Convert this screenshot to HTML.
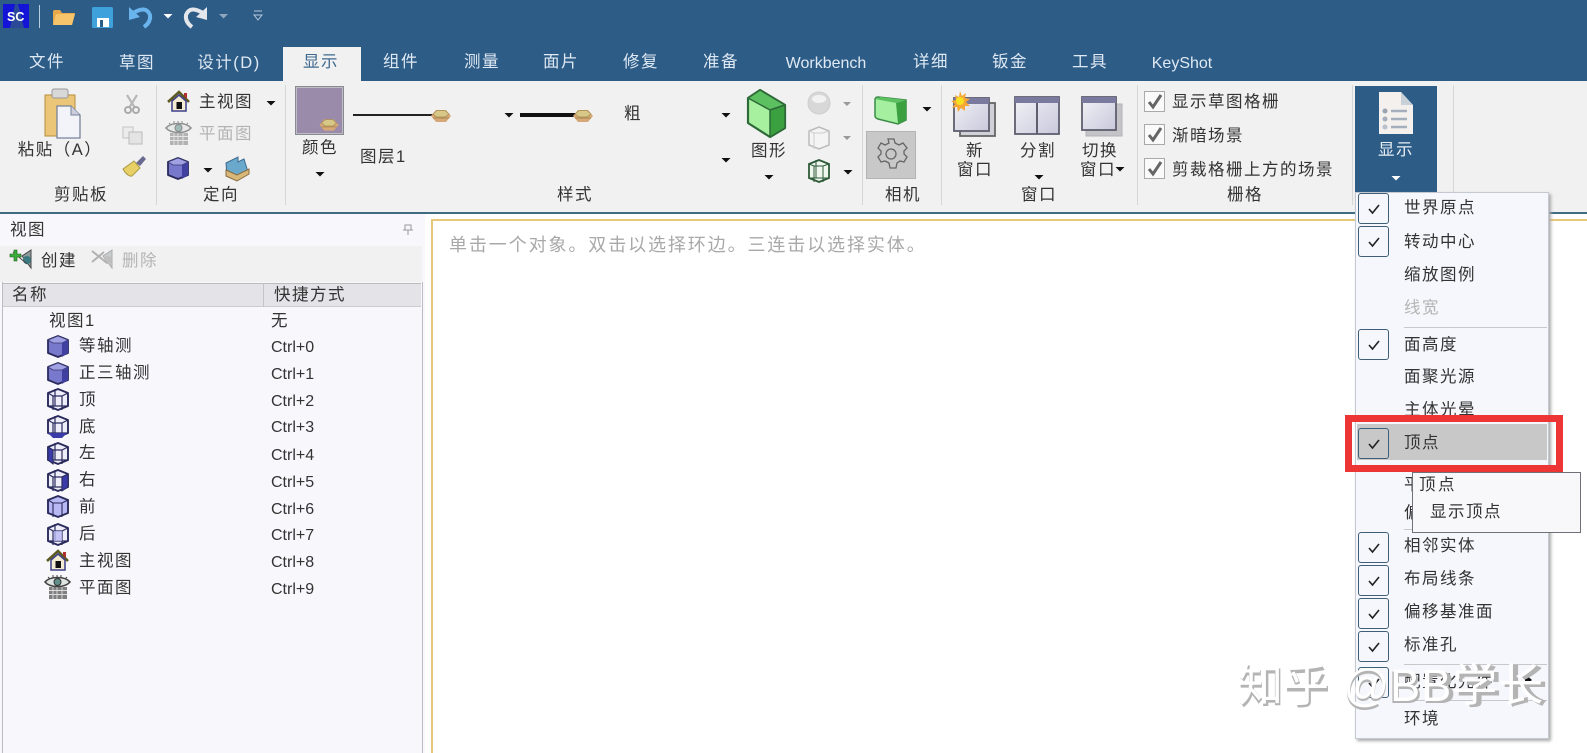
<!DOCTYPE html>
<html lang="zh">
<head>
<meta charset="utf-8">
<title>SpaceClaim</title>
<style>
html,body{margin:0;padding:0}
body{width:1587px;height:753px;overflow:hidden;position:relative;background:#fff;font-family:"Liberation Sans","Noto Sans CJK SC",sans-serif}
.b{position:absolute}
.t{position:absolute;white-space:nowrap;font-size:16.5px;line-height:20px;letter-spacing:1.5px;color:#333}
.c{transform:translateX(-50%)}
.w{color:#dfe9f3}
.g{color:#b4b4b4}
.l{letter-spacing:0;font-size:16px}
.ck{position:absolute;left:1358px;width:29px;height:29px;border:1px solid #3f5f78;border-radius:3px}
.ck svg{position:absolute;left:8px;top:9px}
.cb{position:absolute;left:1144px;width:19px;height:19px;border:1px solid #aaa;background:#fafafa}
.cb svg{position:absolute;left:2px;top:1px}
</style>
</head>
<body>
<div class="b" style="left:0;top:0;width:1587px;height:81px;background:#2d5c87"></div>
<div class="b" style="left:283px;top:47px;width:78px;height:34px;background:#f1f1f1"></div>
<div class="b" style="left:0;top:81px;width:1587px;height:131px;background:#f1f1f1"></div>
<div class="b" style="left:0;top:212px;width:1587px;height:2px;background:#3e6c82"></div>
<div class="b" style="left:0;top:214px;width:1587px;height:539px;background:#fff"></div>
<div class="b" style="left:0;top:214px;width:425px;height:539px;background:#f8f8fc"></div>
<div class="b" style="left:0;top:246px;width:422px;height:36px;background:#f1f1f1"></div>
<div class="b" style="left:2px;top:282px;width:421px;height:471px;border-left:1px solid #bcbcc6;border-right:1px solid #bcbcc6;box-sizing:border-box"></div>
<div class="b" style="left:3px;top:283px;width:418px;height:24px;background:#e4e4e8;border-top:1px solid #bbb;border-bottom:1px solid #ccc;box-sizing:border-box"></div>
<div class="b" style="left:263px;top:283px;width:1px;height:24px;background:#c4c4c8"></div>
<div class="b" style="left:431px;top:219px;width:1156px;height:2px;background:#e6c878"></div>
<div class="b" style="left:431px;top:219px;width:2px;height:534px;background:#e6c878"></div>
<div class="b" style="left:156px;top:85px;width:1px;height:120px;background:#d6d6d6"></div>
<div class="b" style="left:285px;top:85px;width:1px;height:120px;background:#d6d6d6"></div>
<div class="b" style="left:862px;top:85px;width:1px;height:120px;background:#d6d6d6"></div>
<div class="b" style="left:941px;top:85px;width:1px;height:120px;background:#d6d6d6"></div>
<div class="b" style="left:1137px;top:85px;width:1px;height:120px;background:#d6d6d6"></div>
<div class="b" style="left:1352px;top:85px;width:1px;height:120px;background:#d6d6d6"></div>
<div class="b" style="left:1453px;top:85px;width:1px;height:120px;background:#d6d6d6"></div>
<div class="b" style="left:295px;top:86px;width:45px;height:45px;background:#9b8bab;border:2px solid #bdbdc4;outline:1px solid #8a8a92;outline-offset:-1px"></div>
<div class="b" style="left:866px;top:131px;width:48px;height:46px;background:#c8c8c8;border:1px solid #b4b4b4"></div>
<div class="b" style="left:1355px;top:86px;width:82px;height:106px;background:#2d5c87"></div>

<svg class="b" style="left:0;top:0" width="1587" height="753" viewBox="0 0 1587 753">
<defs>
<path id="a" d="M-4.500 -2h9l-4.500 4.500z" fill="#111"/>
<g id="lens"><path d="M-10 1l5-6h10l5 6-5 6H-5z" fill="#d6a878"/><path d="M-8 -1l4-3.500h8l4 3.500-4 3H-4z" fill="#d8c888" stroke="#a88a50" stroke-width=".7"/><path d="M-8 3h16" stroke="#a88a50" stroke-width="1"/></g>
<g id="solid" stroke-linejoin="round"><path d="M11 1l10 4v13l-10 4-10-4V5z" fill="#7878cc" stroke="#2a2a5c" stroke-width="1.800"/><path d="M1 5l10-4 10 4-6 3H6z" fill="#a0a0e4" stroke="#3a3a70" stroke-width=".8"/><path d="M15 8l6-3v13l-6 4z" fill="#4040a0"/></g>
<g id="wire" stroke-linejoin="round"><path d="M11 1l10 4v13l-10 4-10-4V5z" fill="#eeeefa" stroke="#2a2a5c" stroke-width="1.900"/><path d="M1 5l5 3h9l6-3M6 8v14M15 8v14M1 18h20M8 1v17" fill="none" stroke="#2a2a5c" stroke-width="1.200"/></g>
<g id="home"><path d="M1 12L12 2l10 10" fill="none" stroke="#5d5a24" stroke-width="2.600"/><path d="M17 3h3v6l-3-3z" fill="#b03030"/><path d="M5 11l7-6 7 6v10H5z" fill="#f3ecd2" stroke="#3e3e88" stroke-width="1.500"/><rect x="9.500" y="12" width="5.500" height="7" fill="#111"/></g>
<g id="eye"><rect x="4" y="12" width="18" height="12" fill="#7f7f7f"/><path d="M4 15.500h18M4 19.500h18M8 12v12M12 12v12M17 12v12" stroke="#ddd" stroke-width=".9"/><path d="M0 7c5-6 20-6 25 0-5 6-20 6-25 0z" fill="#dfe5e3" stroke="#444" stroke-width="1.600"/><circle cx="12.500" cy="7" r="3.500" fill="#5f8f88" stroke="#333"/><path d="M3 2l2 2M8 0v3M12 0v3M16 0v3M22 2l-2 2" stroke="#444"/></g>
<linearGradient id="win" x1="0" y1="0" x2="1" y2="1"><stop offset="0" stop-color="#f2f2f6"/><stop offset="1" stop-color="#c8c8dc"/></linearGradient>
</defs>

<!-- quick access toolbar -->
<rect x="3" y="4" width="26" height="24" fill="#1414d8"/>
<path d="M10 28L15 4h3l6 24z" fill="#2a4a98"/>
<text x="7" y="21" font-family="Liberation Sans" font-weight="700" font-size="12.500" fill="#fff">SC</text>
<rect x="39" y="5" width="1" height="23" fill="#b9cde0"/>
<path d="M53 12v11q0 2 2 2h17l3-12H62l-2-3h-5q-2 0-2 2z" fill="#e9a94a"/><path d="M56 14h19l-3 11H53z" fill="#f7c46c"/>
<rect x="92" y="7" width="21" height="21" rx="1.500" fill="#3fa1dc"/><rect x="97" y="18" width="12" height="9" fill="#fff"/><rect x="100" y="20" width="3" height="7" fill="#2d5c87"/>
<path d="M133 13Q146 5 150 15Q151 22 144 27" fill="none" stroke="#6ab4ee" stroke-width="4"/><path d="M129 7v13l11-3z" fill="#6ab4ee"/>
<path d="M163.500 14h9L168 18.500z" fill="#fff"/>
<path d="M203 13Q190 5 186 15Q185 22 192 27" fill="none" stroke="#e3e6ea" stroke-width="4"/><path d="M207 7v13l-11-3z" fill="#e3e6ea"/>
<path d="M219 14h9l-4.500 4.500z" fill="#8ea7bf"/>
<path d="M254 11h8M254 15h8l-4 5z" fill="none" stroke="#b8c8d8" stroke-width="1"/>

<!-- paste -->
<path d="M45 95h30v41H45z" fill="#ecc678" stroke="#b68c3c"/><rect x="52" y="89" width="16" height="9" rx="2" fill="#d8d8d8" stroke="#999"/>
<path d="M57 106h14l9 9v23H57z" fill="#f2f4fa" stroke="#77839a" stroke-width="1.300"/><path d="M71 106v9h9" fill="#ccd" stroke="#77839a"/>
<path d="M127 95l8 13M137 95l-8 13" stroke="#b8b8b8" stroke-width="2.200"/><circle cx="128" cy="110" r="3" fill="none" stroke="#aaa" stroke-width="2"/><circle cx="136" cy="110" r="3" fill="none" stroke="#aaa" stroke-width="2"/>
<rect x="123" y="127" width="10" height="11" fill="#ececec" stroke="#c4c4c4"/><rect x="129" y="132" width="13" height="12" fill="#e4e4e4" stroke="#bbb"/>
<path d="M123 169l11-8 6 7-8 8c-3 1-7-3-9-7z" fill="#e8cf66" stroke="#a99a44"/><path d="M136 163l7-7 3 3-6 7z" fill="#6a6a90"/>

<!-- orientation -->
<use href="#home" transform="translate(167 90)"/>
<g opacity=".55"><use href="#eye" transform="translate(166 121)"/></g>
<use href="#a" x="271" y="103"/>
<use href="#solid" transform="translate(167 157)"/>
<use href="#a" x="208" y="170"/>
<path d="M226 163l12-6v5l6-3 4 13-11 7-10-4z" fill="#6aa8cc" stroke="#3c6a90"/><path d="M226 170l11 5 12-6v5l-12 7-11-5z" fill="#d8b878" stroke="#8a6a3c"/>

<!-- style -->
<use href="#lens" transform="translate(329 124) scale(.95)"/>
<use href="#a" x="320" y="174"/>
<rect x="353" y="114" width="82" height="2" fill="#222"/>
<use href="#lens" transform="translate(441 115)"/>
<use href="#a" x="509" y="115"/>
<rect x="520" y="113" width="57" height="4" fill="#111"/>
<use href="#lens" transform="translate(583 115)"/>
<use href="#a" x="726" y="115"/>
<use href="#a" x="726" y="160"/>

<!-- graphics -->
<g stroke="#2d6a38" stroke-linejoin="round">
<path d="M748 98l12-8 25 15v23l-15 9-22-14z" fill="#a6f0a0" stroke-width="2.200"/>
<path d="M748 98l12-8 25 15-15 5z" fill="#5cc060" stroke-width="1.500"/>
<path d="M770 110l15-5v23l-15 9z" fill="#3aa040" stroke-width="1.500"/>
</g>
<use href="#a" x="769" y="177"/>
<circle cx="819" cy="103" r="11" fill="#d8d8d8" stroke="#ccc"/><ellipse cx="819" cy="99" rx="7" ry="4" fill="#f2f2f2"/>
<path d="M843 102h8l-4 4z" fill="#999"/>
<path d="M809 131l10-4 10 4v14l-10 4-10-4z" fill="#f4f4f4" stroke="#bbb" stroke-width="1.500"/><path d="M814 133v16M809 131l5 2h9l6-2" fill="none" stroke="#ccc"/>
<path d="M843 136h8l-4 4z" fill="#999"/>
<path d="M809 164l10-4 10 4v14l-10 4-10-4z" fill="#eef6ee" stroke="#2d5a38" stroke-width="1.800"/><path d="M809 164l5 2h9l6-2M814 166v16M823 166v16M809 178h20M816 160v18" fill="none" stroke="#2d5a38"/>
<use href="#a" x="848" y="172"/>

<!-- camera -->
<path d="M875 100q0-3 3-3l28 3v20l-8 4-20-5q-3-1-3-3z" fill="#a4f0a0" stroke="#3a8a48" stroke-width="1.500"/><path d="M896 103l10-3v20l-8 4z" fill="#3aa040"/><path d="M875 99l6-2 25 3-10 3z" fill="#5cc060"/>
<use href="#a" x="927" y="109"/>
<g transform="translate(891 154)" fill="none" stroke="#666" stroke-width="1.300"><path d="M-3-15h6l1 4 4 2 4-2 4 5-3 3v3l3 3-3 5-4-1-3 2-1 5h-6l-1-5-4-2-4 1-3-5 3-3v-3l-3-3 3-5 4 2 4-2z"/><circle r="5"/></g>

<!-- window group -->
<rect x="960" y="103" width="35" height="33" fill="#d0d0d8" stroke="#666" stroke-width="1.800"/>
<rect x="954" y="98" width="35" height="33" fill="url(#win)" stroke="#5e5e6e" stroke-width="1.800"/><rect x="954" y="98" width="35" height="6" fill="#7a7a9e"/>
<path d="M960 91l2 5 4-3-1 5 5 1-4 3 4 4-5 0 0 5-4-3-3 4-1-5-5 1 3-4-4-3 5-1-1-5 4 2z" fill="#f5a838"/><circle cx="960" cy="101" r="4" fill="#f8e020"/>
<rect x="1015" y="97" width="44" height="37" fill="url(#win)" stroke="#5e5e6e" stroke-width="1.800"/><rect x="1015" y="97" width="44" height="6" fill="#7a7a9e"/><rect x="1036" y="103" width="2" height="31" fill="#5e5e6e"/>
<use href="#a" x="1039" y="177"/>
<rect x="1086" y="104" width="36" height="32" fill="#c4c4c8" stroke="#b4b4b8"/>
<rect x="1082" y="97" width="34" height="33" fill="url(#win)" stroke="#5e5e6e" stroke-width="1.800"/><rect x="1082" y="97" width="34" height="6" fill="#7a7a9e"/>
<use href="#a" x="1120" y="169"/>

<!-- display doc -->
<path d="M1379 92h22l12 13v29h-34z" fill="#f3f0ee"/><path d="M1401 92v13h12z" fill="#c8d0d8"/>
<circle cx="1385" cy="111" r="2.500" fill="#9aa4b2"/><circle cx="1385" cy="119" r="2.500" fill="#a4aebc"/><circle cx="1385" cy="127" r="2.500" fill="#b8c0cc"/>
<path d="M1391 111h16M1391 119h16M1391 127h16" stroke="#a4aebc" stroke-width="2.500"/>
<path d="M1391.500 176h9l-4.500 4.500z" fill="#fff"/>

<!-- left panel -->
<path d="M405 225h6v5h-6zM403 230h10M408 230v5" fill="none" stroke="#999"/>
<path d="M22 256l9-6v18z" fill="#8a9a9a" stroke="#444"/><circle cx="27" cy="260" r="4" fill="#3a7a80"/><path d="M13 252l14 12" stroke="#444"/>
<path d="M10 254h4v-4h3v4h4v3h-4v4h-3v-4h-4z" fill="#3cae3c" stroke="#1a5a1a" stroke-width=".6"/>
<g opacity=".4"><path d="M103 256l9-6v18z" fill="#8a9a9a" stroke="#444"/><circle cx="108" cy="260" r="4" fill="#777"/><path d="M92 251l15 12M92 262l12-10" stroke="#555" stroke-width="2"/></g>
<use href="#solid" transform="translate(47 335)"/>
<use href="#solid" transform="translate(47 362)"/>
<use href="#wire" transform="translate(47 388)"/>
<use href="#wire" transform="translate(47 415)"/><path d="M48 433l5 5h9l5-5z" fill="#3a3aa8"/>
<use href="#wire" transform="translate(47 442)"/><path d="M48 447v13l5 4v-14z" fill="#3a3aa8" stroke="#2a2a5c"/>
<use href="#wire" transform="translate(47 469)"/><path d="M62 477l6-3v13l-6 4z" fill="#3a3aa8" stroke="#2a2a5c"/>
<path d="M58 496l10 4v13l-10 4-10-4v-13z" fill="#b8b8f4" stroke="#2a2a5c" stroke-width="1.900"/><path d="M48 500l5 3h9l6-3M53 503v14M62 503v14" fill="none" stroke="#2a2a5c" stroke-width="1.100"/>
<use href="#wire" transform="translate(47 523)"/><rect x="54" y="531" width="8" height="10" fill="#b8b8f4" opacity=".8"/>
<use href="#home" transform="translate(46 549)"/>
<use href="#eye" transform="translate(45 575)"/>
</svg>

<!-- tabs -->
<span class="t c w" style="left:47px;top:52px">文件</span>
<span class="t c w" style="left:137px;top:53px">草图</span>
<span class="t c w" style="left:229px;top:53px">设计(D)</span>
<span class="t c" style="left:321px;top:52px;color:#3f6a90">显示</span>
<span class="t c w" style="left:401px;top:52px">组件</span>
<span class="t c w" style="left:482px;top:52px">测量</span>
<span class="t c w" style="left:561px;top:52px">面片</span>
<span class="t c w" style="left:641px;top:52px">修复</span>
<span class="t c w" style="left:721px;top:52px">准备</span>
<span class="t c w l" style="left:826px;top:54px">Workbench</span>
<span class="t c w" style="left:931px;top:52px">详细</span>
<span class="t c w" style="left:1010px;top:52px">钣金</span>
<span class="t c w" style="left:1090px;top:52px">工具</span>
<span class="t c w l" style="left:1182px;top:54px">KeyShot</span>

<!-- ribbon text -->
<span class="t c" style="left:60px;top:140px">粘贴（A）</span>
<span class="t c" style="left:81px;top:185px">剪贴板</span>
<span class="t" style="left:199px;top:92px">主视图</span>
<span class="t g" style="left:199px;top:124px">平面图</span>
<span class="t c" style="left:221px;top:185px">定向</span>
<span class="t c" style="left:320px;top:138px">颜色</span>
<span class="t" style="left:360px;top:147px">图层1</span>
<span class="t" style="left:624px;top:104px">粗</span>
<span class="t c" style="left:575px;top:185px">样式</span>
<span class="t c" style="left:769px;top:141px">图形</span>
<span class="t c" style="left:903px;top:185px">相机</span>
<span class="t c" style="left:975px;top:141px">新</span>
<span class="t c" style="left:975px;top:160px">窗口</span>
<span class="t c" style="left:1038px;top:141px">分割</span>
<span class="t c" style="left:1039px;top:185px">窗口</span>
<span class="t c" style="left:1100px;top:141px">切换</span>
<span class="t" style="left:1080px;top:160px">窗口</span>
<div class="cb" style="top:91px"><svg width="16" height="17" viewBox="0 0 16 17"><path d="M2 9l4 5 8-12" fill="none" stroke="#666" stroke-width="3"/></svg></div>
<div class="cb" style="top:124px"><svg width="16" height="17" viewBox="0 0 16 17"><path d="M2 9l4 5 8-12" fill="none" stroke="#666" stroke-width="3"/></svg></div>
<div class="cb" style="top:158px"><svg width="16" height="17" viewBox="0 0 16 17"><path d="M2 9l4 5 8-12" fill="none" stroke="#666" stroke-width="3"/></svg></div>
<span class="t" style="left:1172px;top:92px">显示草图格栅</span>
<span class="t" style="left:1172px;top:126px">渐暗场景</span>
<span class="t" style="left:1172px;top:160px">剪裁格栅上方的场景</span>
<span class="t c" style="left:1245px;top:185px">栅格</span>
<span class="t c" style="left:1396px;top:140px;color:#e8eef5">显示</span>

<!-- left panel text -->
<span class="t" style="left:10px;top:220px">视图</span>
<span class="t" style="left:41px;top:251px">创建</span>
<span class="t g" style="left:122px;top:251px">删除</span>
<span class="t" style="left:12px;top:285px">名称</span>
<span class="t" style="left:274px;top:285px">快捷方式</span>
<span class="t" style="left:49px;top:311px">视图1</span><span class="t" style="left:271px;top:311px">无</span>
<span class="t" style="left:79px;top:336px">等轴测</span><span class="t l" style="left:271px;top:338px">Ctrl+0</span>
<span class="t" style="left:79px;top:363px">正三轴测</span><span class="t l" style="left:271px;top:365px">Ctrl+1</span>
<span class="t" style="left:79px;top:390px">顶</span><span class="t l" style="left:271px;top:392px">Ctrl+2</span>
<span class="t" style="left:79px;top:417px">底</span><span class="t l" style="left:271px;top:418px">Ctrl+3</span>
<span class="t" style="left:79px;top:443px">左</span><span class="t l" style="left:271px;top:446px">Ctrl+4</span>
<span class="t" style="left:79px;top:470px">右</span><span class="t l" style="left:271px;top:473px">Ctrl+5</span>
<span class="t" style="left:79px;top:497px">前</span><span class="t l" style="left:271px;top:500px">Ctrl+6</span>
<span class="t" style="left:79px;top:524px">后</span><span class="t l" style="left:271px;top:526px">Ctrl+7</span>
<span class="t" style="left:79px;top:551px">主视图</span><span class="t l" style="left:271px;top:553px">Ctrl+8</span>
<span class="t" style="left:79px;top:578px">平面图</span><span class="t l" style="left:271px;top:580px">Ctrl+9</span>

<span class="t" style="left:449px;top:235px;font-size:18px;letter-spacing:1.900px;color:#a8a8a8">单击一个对象。双击以选择环边。三连击以选择实体。</span>

<!-- dropdown menu -->
<div class="b" style="left:1355px;top:192px;width:194px;height:547px;background:#f6f7fc;border:1px solid #c4c8d0;box-sizing:border-box;box-shadow:2px 2px 3px #aaa"></div>
<div class="b" style="left:1404px;top:327px;width:143px;height:1px;background:#c8c8cc"></div>
<div class="b" style="left:1404px;top:529px;width:143px;height:1px;background:#c8c8cc"></div>
<div class="b" style="left:1404px;top:664px;width:143px;height:1px;background:#c8c8cc"></div>
<div class="b" style="left:1404px;top:700px;width:143px;height:1px;background:#c8c8cc"></div>
<div class="b" style="left:1357px;top:424px;width:190px;height:36px;background:#c8c8c8"></div>

<div class="ck" style="top:193px"><svg width="14" height="12" viewBox="0 0 14 12"><path d="M2 6l3.500 4L12 2" fill="none" stroke="#222" stroke-width="1.600"/></svg></div>
<div class="ck" style="top:226px"><svg width="14" height="12" viewBox="0 0 14 12"><path d="M2 6l3.500 4L12 2" fill="none" stroke="#222" stroke-width="1.600"/></svg></div>
<div class="ck" style="top:329px"><svg width="14" height="12" viewBox="0 0 14 12"><path d="M2 6l3.500 4L12 2" fill="none" stroke="#222" stroke-width="1.600"/></svg></div>
<div class="ck" style="top:428px"><svg width="14" height="12" viewBox="0 0 14 12"><path d="M2 6l3.500 4L12 2" fill="none" stroke="#222" stroke-width="1.600"/></svg></div>
<div class="ck" style="top:532px"><svg width="14" height="12" viewBox="0 0 14 12"><path d="M2 6l3.500 4L12 2" fill="none" stroke="#222" stroke-width="1.600"/></svg></div>
<div class="ck" style="top:565px"><svg width="14" height="12" viewBox="0 0 14 12"><path d="M2 6l3.500 4L12 2" fill="none" stroke="#222" stroke-width="1.600"/></svg></div>
<div class="ck" style="top:598px"><svg width="14" height="12" viewBox="0 0 14 12"><path d="M2 6l3.500 4L12 2" fill="none" stroke="#222" stroke-width="1.600"/></svg></div>
<div class="ck" style="top:631px"><svg width="14" height="12" viewBox="0 0 14 12"><path d="M2 6l3.500 4L12 2" fill="none" stroke="#222" stroke-width="1.600"/></svg></div>
<div class="ck" style="top:667px"><svg width="14" height="12" viewBox="0 0 14 12"><path d="M2 6l3.500 4L12 2" fill="none" stroke="#222" stroke-width="1.600"/></svg></div>

<span class="t" style="left:1404px;top:198px">世界原点</span>
<span class="t" style="left:1404px;top:232px">转动中心</span>
<span class="t" style="left:1404px;top:265px">缩放图例</span>
<span class="t g" style="left:1404px;top:298px">线宽</span>
<span class="t" style="left:1404px;top:335px">面高度</span>
<span class="t" style="left:1404px;top:367px">面聚光源</span>
<span class="t" style="left:1404px;top:400px">主体光晕</span>
<span class="t" style="left:1404px;top:433px">顶点</span>
<span class="t" style="left:1404px;top:475px">平面</span>
<span class="t" style="left:1404px;top:503px">偏移</span>
<span class="t" style="left:1404px;top:536px">相邻实体</span>
<span class="t" style="left:1404px;top:569px">布局线条</span>
<span class="t" style="left:1404px;top:602px">偏移基准面</span>
<span class="t" style="left:1404px;top:635px">标准孔</span>
<span class="t" style="left:1404px;top:672px">配置化元件</span>
<span class="t" style="left:1404px;top:709px">环境</span>
<svg class="b" style="left:1524px;top:673px" width="10" height="14" viewBox="0 0 10 14"><path d="M1 1l7 6-7 6z" fill="#111"/></svg>

<!-- red highlight -->
<div class="b" style="left:1345px;top:415px;width:218px;height:57px;border:7px solid #ee3535;box-sizing:border-box"></div>

<!-- tooltip -->
<div class="b" style="left:1412px;top:472px;width:169px;height:61px;background:#f8f8fb;border:1px solid #707078;box-sizing:border-box"></div>
<span class="t" style="left:1419px;top:475px;letter-spacing:2.500px">顶点</span>
<span class="t" style="left:1430px;top:502px">显示顶点</span>

<!-- watermark -->
<span class="t" style="left:1238px;top:658px;font-size:45px;line-height:56px;letter-spacing:1px;font-weight:700;color:#b4b4b4;transform:translate(1px,2px)">知乎 @BB学长</span>
<span class="t" style="left:1238px;top:658px;font-size:45px;line-height:56px;letter-spacing:1px;font-weight:400;color:#fff">知乎 @BB学长</span>
</body>
</html>
